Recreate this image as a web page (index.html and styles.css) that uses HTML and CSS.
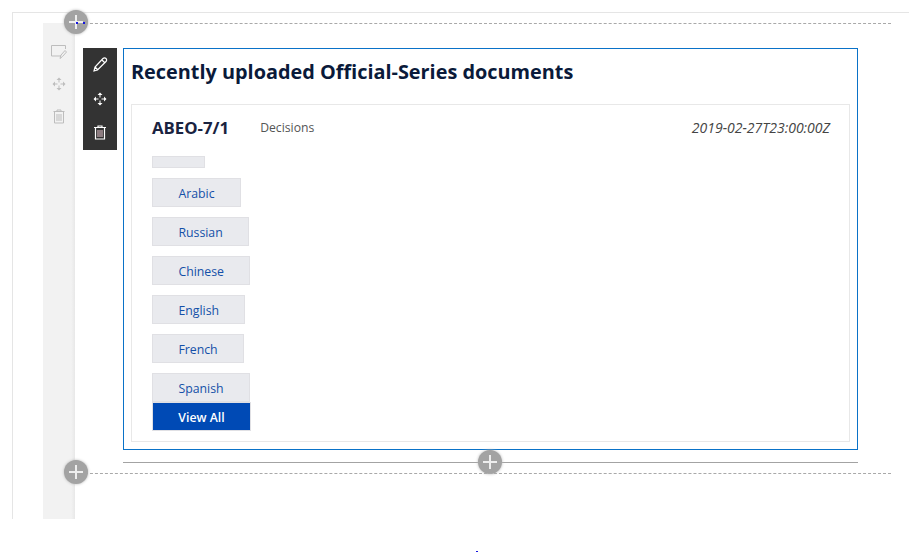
FILE: index.html
```html
<!DOCTYPE html>
<html>
<head>
    <title>Recently uploaded documents</title>
    <link rel="stylesheet" href="styles.css">
</head>
<body>
    <div class="frame">
        <div class="sidebar">
            <svg class="side-icon" width="16" height="14" viewBox="0 0 16 14"><path d="M10 11H.500V.500h14V4" fill="none" stroke="currentColor"/><path d="M9 13.500l1-3.500 4-4.500 1.500 1.500-4 4.500z" fill="none" stroke="currentColor"/></svg>
            <svg class="side-icon" width="14" height="14" viewBox="0 0 14 14"><path d="M7 3v2.500M7 8.500V11M3 7h2.500M8.500 7H11" stroke="currentColor"/><path d="M7 .500L9.500 3h-5zM7 13.500L4.500 11h5zM.500 7L3 4.500v5zM13.500 7L11 9.500v-5z" fill="currentColor"/></svg>
            <svg class="side-icon" width="12" height="15" viewBox="0 0 12 15"><path d="M.500 2.500h11M4 2.500V1h4v1.500M1.500 2.500V14h9V2.500M4 5v7M6 5v7M8 5v7" fill="none" stroke="currentColor"/></svg>
        </div>
        <div class="section">
            <button class="add-btn add-top"><span class="plus"></span></button>
            <span class="dot dot-a"></span>
            <span class="dot dot-b"></span>
            <div class="edit-row">
                <div class="toolbar">
                    <svg width="15" height="15" viewBox="0 0 15 15"><path d="M1 14l1-4 8-8.500a1.500 1.500 0 0 1 3 3L4.500 13zM2 10l3 3M9 3l3 3" fill="none" stroke="#fff" stroke-width="1.200"/></svg>
                    <svg width="14" height="14" viewBox="0 0 14 14"><path d="M7 3v2.500M7 8.500V11M3 7h2.500M8.500 7H11" stroke="#fff"/><path d="M7 .500L9.500 3h-5zM7 13.500L4.500 11h5zM.500 7L3 4.500v5zM13.500 7L11 9.500v-5z" fill="#fff"/></svg>
                    <svg width="12" height="15" viewBox="0 0 12 15"><path d="M0 2.500h12M4 2.500V1h4v1.500M1.500 2.500V14h9V2.500" fill="none" stroke="#fff" stroke-width="1.200"/><path d="M4 5v7M6 5v7M8 5v7" stroke="#e9c8d0"/></svg>
                </div>
                <div class="editor">
                    <h1 class="title">Recently uploaded Official-Series documents</h1>
                    <div class="card">
                        <div class="card-head">
                            <h2 class="symbol">ABEO-7/1</h2>
                            <span class="category">Decisions</span>
                            <span class="date">2019-02-27T23:00:00Z</span>
                        </div>
                        <div class="langs">
                            <a class="lang empty"></a>
                            <a class="lang">Arabic</a>
                            <a class="lang">Russian</a>
                            <a class="lang">Chinese</a>
                            <a class="lang">English</a>
                            <a class="lang">French</a>
                            <a class="lang">Spanish</a>
                            <a class="view-all">View All</a>
                        </div>
                    </div>
                </div>
            </div>
            <div class="rule">
                <button class="add-btn add-mid"><span class="plus"></span></button>
            </div>
            <div class="section-end">
                <button class="add-btn add-bottom"><span class="plus"></span></button>
            </div>
        </div>
    </div>
    <span class="dot dot-c"></span>
</body>
</html>
```

FILE: styles.css
```css
html, body {
    margin: 0;
    padding: 0;
    height: 552px;
    overflow: hidden;
    background: #fff;
    font-family: "Open Sans", sans-serif;
}

.frame {
    display: flex;
    box-sizing: border-box;
    height: 507px;
    margin: 12px 0 0 12px;
    padding: 10px 18px 0 30px;
    border-top: 1px solid #e5e5e5;
    border-left: 1px solid #e5e5e5;
}

.sidebar {
    display: flex;
    flex-direction: column;
    align-items: center;
    flex: none;
    width: 32px;
    padding-top: 22px;
    gap: 18px;
    box-sizing: border-box;
    background: linear-gradient(90deg, #f2f2f2 88%, #e8e8e8);
    color: #bdbdbd;
}

.side-icon {
    display: block;
    margin-right: 1px;
}

.section {
    position: relative;
    flex: 1;
    padding: 24px 0 0 8px;
    border-top: 1px dashed #a9a9a9;
}

.edit-row {
    display: flex;
    gap: 6px;
}

.toolbar {
    display: flex;
    flex-direction: column;
    align-items: center;
    justify-content: space-between;
    flex: none;
    box-sizing: border-box;
    width: 34px;
    height: 102px;
    padding: 9px 0 10px;
    background: #333;
}

.editor {
    box-sizing: border-box;
    width: 735px;
    height: 402px;
    padding: 7px;
    border: 1px solid #0a72c8;
}

.title {
    margin: 0;
    height: 48px;
    font-size: 19.870px;
    line-height: 32px;
    font-weight: 700;
    color: #0a1a3a;
}

.card {
    box-sizing: border-box;
    height: 338px;
    padding: 10px 19px 0 20px;
    border: 1px solid #e8e8e8;
}

.card-head {
    display: flex;
    align-items: center;
    height: 24px;
}

.symbol {
    margin: 0 31px 0 0;
    font-size: 16.800px;
    font-weight: 700;
    color: #1a2340;
}

.category {
    font-size: 12.200px;
    color: #555;
}

.date {
    margin-left: auto;
    font-size: 14px;
    font-style: italic;
    color: #444;
}

.langs {
    display: flex;
    flex-direction: column;
    align-items: flex-start;
    gap: 10px;
    margin-top: 17px;
}

.lang {
    box-sizing: border-box;
    height: 29px;
    padding: 0 25.400px;
    border: 1px solid #e0e0e4;
    background: #e9eaee;
    font-size: 12.300px;
    line-height: 29px;
    color: #1450a8;
}

.lang.empty {
    width: 52px;
    height: 12px;
}

.view-all {
    box-sizing: border-box;
    width: 99px;
    height: 29px;
    margin-top: -10px;
    border: 1px solid #e0e0e4;
    background: #004ab5;
    color: #fff;
    font-size: 12.300px;
    font-weight: 600;
    line-height: 29px;
    text-align: center;
}

.rule {
    position: relative;
    width: 735px;
    margin: 12px 0 0 40px;
    border-top: 1px solid #a3a3a3;
}

.section-end {
    position: relative;
    margin: 10px 0 0 -8px;
    border-top: 1px dashed #a9a9a9;
}

.add-btn {
    position: absolute;
    width: 24px;
    height: 24px;
    padding: 0;
    border: 0;
    border-radius: 50%;
    background: #a3a3a3;
    box-shadow: 0 0 3px #b5b5b5;
}

.add-top {
    top: -14px;
    left: -11px;
}

.add-mid {
    top: -13px;
    left: 355px;
}

.add-bottom {
    top: -14px;
    left: -11px;
}

.plus {
    position: absolute;
    top: 4px;
    left: 4px;
    width: 16px;
    height: 16px;
    background:
        linear-gradient(#eee, #eee) center / 14px 2px no-repeat,
        linear-gradient(#eee, #eee) center / 2px 14px no-repeat;
}

.dot {
    position: absolute;
    width: 2px;
    height: 2px;
    background: #1414e0;
}

.dot-a {
    top: -2px;
    left: 1px;
}

.dot-b {
    top: -2px;
    left: 8px;
}

.dot-c {
    top: 551px;
    left: 476px;
}
```
